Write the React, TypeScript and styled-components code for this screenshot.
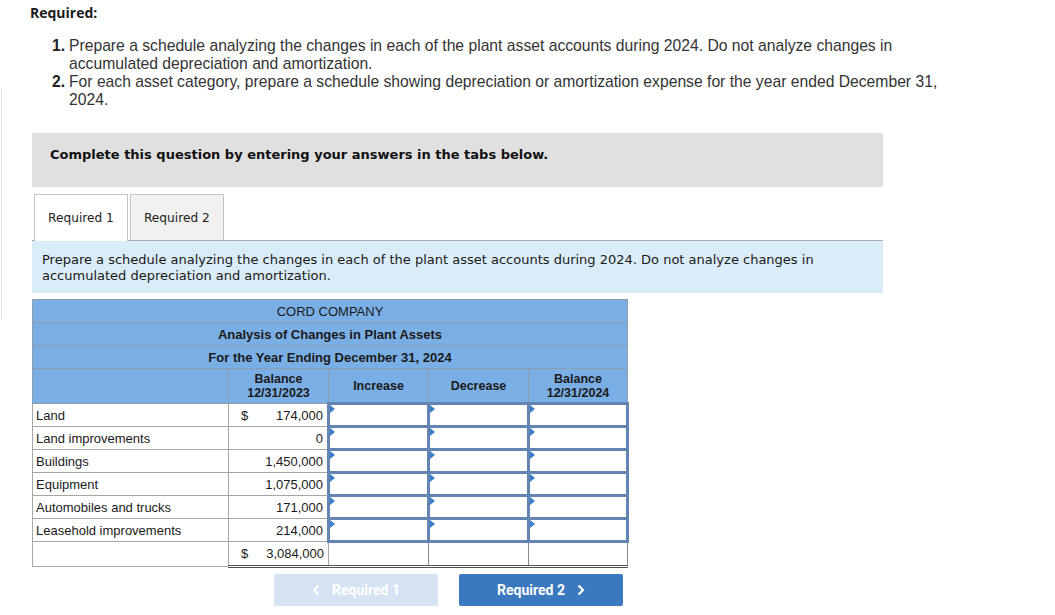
import * as React from "react";
import styled, { createGlobalStyle } from "styled-components";

const GlobalStyle = createGlobalStyle`
  html, body {
    margin: 0;
    padding: 0;
    background: #ffffff;
  }
  body {
    font-family: "Liberation Sans", Arial, sans-serif;
    color: #222;
  }
`;

const Page = styled.div`
  position: relative;
  width: 1055px;
  height: 615px;
  overflow: hidden;
  padding: 4px 0 0 30px;
  box-sizing: border-box;

  &::before {
    content: "";
    position: absolute;
    left: 1px;
    top: 88px;
    height: 232px;
    width: 1px;
    background: #e6e6e6;
  }
`;

const Heading = styled.div`
  font-family: "Open Sans", "Liberation Sans", sans-serif;
  font-weight: 700;
  font-size: 14px;
  line-height: 18px;
  color: #1a1a1a;
`;

const ReqList = styled.div`
  margin: 15px 0 0 22px;
  display: flex;
  flex-direction: column;
  width: 906px;
`;

const ReqItem = styled.div`
  display: flex;
  font-family: "Liberation Sans", Arial, sans-serif;
  font-size: 15.7px;
  line-height: 18px;
  color: #333;
`;

const ReqNum = styled.span`
  flex: 0 0 17px;
  font-weight: 700;
  color: #222;
`;

const ReqText = styled.span`
  flex: 1;
`;

const Panel = styled.div`
  margin: 24px 0 0 2px;
  width: 851px;
`;

const Banner = styled.div`
  height: 54px;
  box-sizing: border-box;
  background: #e0e0e0;
  padding: 14px 0 0 18px;
  font-family: "DejaVu Sans", Verdana, sans-serif;
  font-weight: 700;
  font-size: 13px;
  line-height: 16px;
  color: #111;
`;

const TabRow = styled.div`
  margin-top: 7px;
  display: flex;
  gap: 2px;
  padding-left: 2px;
  border-bottom: 1px solid #a9a9a9;
`;

const Tab = styled.div<{ $active?: boolean }>`
  padding: 0 13px;
  display: flex;
  align-items: center;
  box-sizing: border-box;
  border: 1px solid #c4c4c4;
  border-bottom: none;
  background: ${(p) => (p.$active ? "#ffffff" : "#f1f1f1")};
  font-family: "DejaVu Sans", Verdana, sans-serif;
  font-size: 12.2px;
  color: #222;
  margin-bottom: ${(p) => (p.$active ? "-1px" : "0")};
  height: ${(p) => (p.$active ? "47px" : "46px")};
`;

const Instructions = styled.div`
  background: #dbecf9;
  padding: 11px 40px 9px 10px;
  font-family: "DejaVu Sans", Verdana, sans-serif;
  font-size: 13px;
  line-height: 16px;
  color: #1a1a1a;
`;

const Schedule = styled.table`
  margin-top: 6px;
  width: 595px;
  border-collapse: collapse;
  table-layout: fixed;
  font-family: "Liberation Sans", Arial, sans-serif;
  font-size: 13px;
  color: #1a1a1a;
`;

const TitleCell = styled.td<{ $bold?: boolean }>`
  background: #7aafe6;
  border: 1px solid #8e9cb0;
  height: 22px;
  padding: 0;
  text-align: center;
  font-weight: ${(p) => (p.$bold ? 700 : 400)};
  font-size: 13px;
`;

const ColHead = styled.td`
  background: #7aafe6;
  border: 1px solid #8e9cb0;
  height: 33px;
  padding: 0;
  text-align: center;
  font-weight: 700;
  font-size: 12.5px;
  line-height: 14px;
`;

const LabelCell = styled.td`
  border: 1px solid #a6a6a6;
  height: 22px;
  padding: 0 3px;
  background: #fff;
  white-space: nowrap;
`;

const AmountCell = styled.td<{ $total?: boolean }>`
  border: 1px solid #a6a6a6;
  border-top: ${(p) => (p.$total ? "1px solid #444" : "1px solid #a6a6a6")};
  border-bottom: ${(p) => (p.$total ? "3px double #555" : "1px solid #a6a6a6")};
  height: 22px;
  padding: 0 4px 0 12px;
  background: #fff;
`;

const Amount = styled.div`
  display: flex;
  justify-content: space-between;
`;

const InputCell = styled.td`
  position: relative;
  border: 3px solid #6484b4;
  height: 17px;
  padding: 0;
  background: #fff;

  &::before {
    content: "";
    position: absolute;
    left: 0;
    top: 0;
    border-top: 4px solid transparent;
    border-bottom: 4px solid transparent;
    border-left: 5px solid #3b7ccb;
  }
`;

const BlankCell = styled.td`
  border: 1px solid #8a8a8a;
  border-bottom: 3px double #555;
  height: 22px;
  padding: 0;
  background: #fff;
`;

const NavRow = styled.div`
  width: 591px;
  margin-top: 6px;
  display: flex;
  justify-content: flex-end;
  gap: 21px;
`;

const NavButton = styled.button<{ $disabled?: boolean }>`
  width: 164px;
  height: 32px;
  border: none;
  border-radius: 2px;
  background: ${(p) => (p.$disabled ? "#d6e3f3" : "#3a78c0")};
  color: #fff;
  font-family: Roboto, "Liberation Sans", sans-serif;
  font-weight: 700;
  font-size: 14px;
  display: flex;
  align-items: center;
  justify-content: center;
  gap: 12px;
  cursor: ${(p) => (p.$disabled ? "default" : "pointer")};
`;

const Chevron = ({ dir }: { dir: "left" | "right" }) => (
  <svg width="8" height="12" viewBox="0 0 8 12">
    <path
      d={dir === "left" ? "M6.5 1.5 L2 6 L6.5 10.5" : "M1.5 1.5 L6 6 L1.5 10.5"}
      fill="none"
      stroke="#fff"
      strokeWidth="2.2"
    />
  </svg>
);

const rows = [
  { label: "Land", amount: "174,000", dollar: true },
  { label: "Land improvements", amount: "0" },
  { label: "Buildings", amount: "1,450,000" },
  { label: "Equipment", amount: "1,075,000" },
  { label: "Automobiles and trucks", amount: "171,000" },
  { label: "Leasehold improvements", amount: "214,000" },
];

export default function App() {
  return (
    <Page>
      <GlobalStyle />
      <Heading>Required:</Heading>
      <ReqList>
        <ReqItem>
          <ReqNum>1.</ReqNum>
          <ReqText>
            Prepare a schedule analyzing the changes in each of the plant asset accounts during 2024. Do not analyze changes in
            accumulated depreciation and amortization.
          </ReqText>
        </ReqItem>
        <ReqItem>
          <ReqNum>2.</ReqNum>
          <ReqText>
            For each asset category, prepare a schedule showing depreciation or amortization expense for the year ended December 31,
            2024.
          </ReqText>
        </ReqItem>
      </ReqList>

      <Panel>
        <Banner>Complete this question by entering your answers in the tabs below.</Banner>
        <TabRow>
          <Tab $active>Required 1</Tab>
          <Tab>Required 2</Tab>
        </TabRow>
        <Instructions>
          Prepare a schedule analyzing the changes in each of the plant asset accounts during 2024. Do not analyze changes in
          accumulated depreciation and amortization.
        </Instructions>

        <Schedule>
          <colgroup>
            <col style={{ width: 196 }} />
            <col style={{ width: 100 }} />
            <col style={{ width: 100 }} />
            <col style={{ width: 100 }} />
            <col style={{ width: 99 }} />
          </colgroup>
          <tbody>
            <tr>
              <TitleCell colSpan={5}>CORD COMPANY</TitleCell>
            </tr>
            <tr>
              <TitleCell colSpan={5} $bold>
                Analysis of Changes in Plant Assets
              </TitleCell>
            </tr>
            <tr>
              <TitleCell colSpan={5} $bold>
                For the Year Ending December 31, 2024
              </TitleCell>
            </tr>
            <tr>
              <ColHead />
              <ColHead>
                Balance
                <br />
                12/31/2023
              </ColHead>
              <ColHead>Increase</ColHead>
              <ColHead>Decrease</ColHead>
              <ColHead>
                Balance
                <br />
                12/31/2024
              </ColHead>
            </tr>
            {rows.map((r) => (
              <tr key={r.label}>
                <LabelCell>{r.label}</LabelCell>
                <AmountCell>
                  <Amount>
                    <span>{r.dollar ? "$" : ""}</span>
                    <span>{r.amount}</span>
                  </Amount>
                </AmountCell>
                <InputCell />
                <InputCell />
                <InputCell />
              </tr>
            ))}
            <tr>
              <LabelCell />
              <AmountCell $total>
                <Amount>
                  <span>$</span>
                  <span>3,084,000</span>
                </Amount>
              </AmountCell>
              <BlankCell />
              <BlankCell />
              <BlankCell />
            </tr>
          </tbody>
        </Schedule>

        <NavRow>
          <NavButton $disabled>
            <Chevron dir="left" />
            Required 1
          </NavButton>
          <NavButton>
            Required 2
            <Chevron dir="right" />
          </NavButton>
        </NavRow>
      </Panel>
    </Page>
  );
}
